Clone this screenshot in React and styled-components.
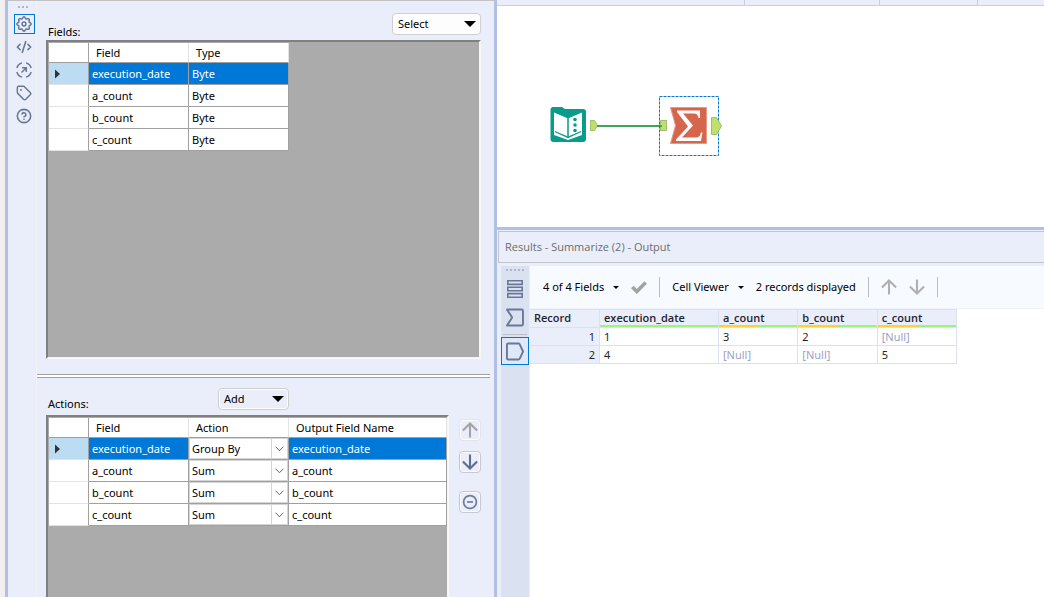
import React from "react";
import styled, { createGlobalStyle } from "styled-components";
import { CircleHelp, CodeXml, Tag } from "lucide-react";

const GlobalStyle = createGlobalStyle`
  * {
    box-sizing: border-box;
  }
  body {
    margin: 0;
    background: #eaeefa;
    color: #000;
    font-family: "Noto Sans", "Open Sans", sans-serif;
    font-size: 11px;
    line-height: 16px;
  }
  button, select {
    font: inherit;
    color: inherit;
  }
  svg {
    display: block;
    flex: none;
  }
`;

const Page = styled.div`
  display: flex;
  height: 100vh;
  overflow: hidden;
`;
const Edge = styled.div`
  flex: none;
  width: 8px;
  background: #f0f0f0;
  border-right: 3px solid #b1c0e2;
`;
const Config = styled.section`
  display: flex;
  flex: none;
  width: 489px;
  border-top: 1px solid #c3c3c6;
  border-right: 3px solid #b1c0e2;
`;
const Rail = styled.nav`
  display: flex;
  flex-direction: column;
  flex: none;
  width: 29px;
  padding: 5px 0 0 6px;
  border-right: 1px solid #f0f2f8;
`;
const Grip = styled.div`
  width: ${(props) => props.$width};
  height: 2px;
  background: repeating-linear-gradient(90deg, #b4b6bc 0 2px, transparent 2px 4px);
  ${Rail} > & {
    margin-left: 4px;
  }
`;
const RailButton = styled.button`
  display: flex;
  align-items: center;
  justify-content: flex-start;
  width: 21px;
  height: 20px;
  margin-bottom: 3px;
  padding: 0 0 0 1px;
  background: none;
  border: 1px solid ${(props) => (props.$active ? "#0078d7" : "transparent")};
  color: #6a7896;
  ${Grip} + & {
    margin-top: 6px;
  }
`;
const Panes = styled.div`
  display: flex;
  flex-direction: column;
  flex: 1;
  min-width: 0;
`;
const Pane = styled.div`
  display: flex;
  flex-direction: column;
  flex: ${(props) => props.$flex};
  min-height: 0;
  padding: ${(props) => props.$padding};
`;
const Splitter = styled.div`
  flex: none;
  height: 4px;
  margin-right: 4px;
  background: #fff;
  border: solid #a0a0a0;
  border-width: 1px 0;
`;
const PaneHead = styled.div`
  display: flex;
  justify-content: ${(props) => (props.$spread ? "space-between" : "flex-start")};
  height: 27px;
  padding-left: 2px;
`;
const PaneLabel = styled.h2`
  width: 170px;
  margin: 0;
  padding-top: ${(props) => props.$top};
  font-size: 11px;
  font-weight: 400;
  line-height: 17px;
`;
const MenuButton = styled.button`
  display: flex;
  align-items: center;
  justify-content: space-between;
  width: ${(props) => props.$width};
  height: 22px;
  padding: 0 4px 0 5px;
  background: ${(props) => (props.$tinted ? "#eaeefa" : "#fdfdfd")};
  border: 1px solid #cfcfd2;
  border-radius: 4px;
  box-shadow: inset 0 0 0 1px #fdfdfd;
`;
const Frame = styled.div`
  flex: 1;
  min-width: 0;
  padding: 1px 0 0 1px;
  background: #ababab;
  border: solid;
  border-width: 2px 2px ${(props) => (props.$open ? "0" : "2px")} 2px;
  border-color: #808080 #f6f6f6 #f6f6f6 #808080;
  overflow: hidden;
`;
const FrameRow = styled.div`
  display: flex;
  gap: 10px;
  flex: 1;
  min-height: 0;
`;
const Grid = styled.table`
  width: ${(props) => props.$width};
  table-layout: fixed;
  border-collapse: separate;
  border-spacing: 0;
`;
const HeadCell = styled.th`
  width: ${(props) => props.$width};
  height: 20px;
  padding: 0 0 0 7px;
  background: #fff;
  border-right: 1px solid #e3e3e3;
  border-bottom: 1px solid #a0a0a0;
  font-weight: 400;
  text-align: left;
  &:first-child {
    border-right-color: #a0a0a0;
  }
`;
const RowMark = styled.td`
  height: 22px;
  padding: 0 0 0 5px;
  background: ${(props) => (props.$active ? "#bbdcf3" : "#fff")};
  border-right: 1px solid #a0a0a0;
  border-bottom: 1px solid #e3e3e3;
`;
const Cell = styled.td`
  height: 22px;
  padding: 0 0 0 ${(props) => (props.$flush ? "0" : "3px")};
  background: ${(props) => (props.$active ? "#0078d7" : "#fff")};
  border-right: 1px solid #a0a0a0;
  border-bottom: 1px solid #a0a0a0;
  color: ${(props) => (props.$active ? "#fff" : "#000")};
`;
const SelectWrap = styled.div`
  display: grid;
  grid-template-columns: 1fr 16px;
  align-items: center;
  height: 21px;
  background: #fff;
  border: 1px solid #d5d5d5;
  color: #000;
  > * {
    grid-row: 1;
  }
  svg {
    grid-column: 2;
    justify-self: center;
    pointer-events: none;
  }
`;
const ActionSelect = styled.select`
  grid-column: 1 / 3;
  width: 100%;
  height: 19px;
  padding: 0 16px 0 2px;
  appearance: none;
  background: linear-gradient(#d5d5d5, #d5d5d5) right 15px top 0 / 1px 100% no-repeat;
  border: 0;
  border-radius: 0;
`;
const SideButtons = styled.div`
  display: flex;
  flex-direction: column;
  gap: 10px;
  padding-top: 4px;
`;
const SideButton = styled.button`
  display: flex;
  align-items: center;
  justify-content: center;
  width: 22px;
  height: 22px;
  padding: 0;
  background: #eaeefa;
  border: 1px solid ${(props) => (props.disabled ? "#e2e4ea" : "#c6c8ce")};
  border-radius: 4px;
  box-shadow: inset 0 0 0 1px #fbfbfd;
  color: ${(props) => (props.disabled ? "#a3a3a3" : "#5f6d90")};
  &:last-child {
    margin-top: 8px;
  }
`;

const Main = styled.main`
  display: flex;
  flex-direction: column;
  flex: 1;
  min-width: 0;
`;
const TabStrip = styled.div`
  display: flex;
  flex: none;
  height: 6px;
  border-bottom: 1px solid #c5cfe8;
`;
const TabSlot = styled.div`
  width: ${(props) => props.$width};
  border-right: 1px solid #c5cfe8;
`;
const Canvas = styled.div`
  position: relative;
  flex: none;
  height: 221px;
  background: #fff;
`;
const Node = styled.div`
  position: absolute;
  left: ${(props) => props.$x}px;
  top: ${(props) => props.$y}px;
`;
const Results = styled.section`
  display: flex;
  flex-direction: column;
  flex: 1;
  min-height: 0;
  padding: 1px 0 0 1px;
  border-top: 3px solid #b1c0e2;
`;
const ResultsTitle = styled.h2`
  flex: none;
  height: 32px;
  margin: 0;
  padding: 0 6px;
  border: 1px solid #c4c5ca;
  border-right: 0;
  color: #6d6d6d;
  font-family: "Open Sans", "Noto Sans", sans-serif;
  font-size: 11px;
  font-weight: 400;
  line-height: 30px;
`;
const ResultsBody = styled.div`
  display: flex;
  flex: 1;
  min-height: 0;
  padding: 3px 0 0 3px;
`;
const ResultsRail = styled.nav`
  display: flex;
  flex-direction: column;
  align-items: center;
  flex: none;
  width: 28px;
  padding-top: 3px;
  background: #dae1f0;
`;
const ViewButton = styled.button`
  display: flex;
  align-items: center;
  justify-content: center;
  width: 28px;
  height: 28px;
  margin-top: ${(props) => (props.$active ? "2px" : "0")};
  padding: 0;
  background: ${(props) => (props.$active ? "#dfe8f8" : "none")};
  border: 1px solid ${(props) => (props.$active ? "#0078d7" : "transparent")};
  color: #6a7896;
  ${Grip} + & {
    margin-top: 4px;
  }
`;
const RailRule = styled.div`
  width: 24px;
  height: 1px;
  margin-top: 3px;
  background: #bcc0c8;
`;
const ResultsPane = styled.div`
  flex: 1;
  min-width: 0;
  margin-left: 1px;
  background: #fff;
`;
const Toolbar = styled.div`
  display: flex;
  align-items: center;
  gap: 12px;
  height: 43px;
  padding-left: 13px;
  background: #f7faff;
  border-bottom: 1px solid #eef2fa;
  white-space: nowrap;
`;
const ToolButton = styled.button`
  display: flex;
  align-items: center;
  gap: 9px;
  padding: 0;
  background: none;
  border: 0;
  color: ${(props) => (props.disabled ? "#b0b0b0" : "#000")};
`;
const Divider = styled.span`
  width: 1px;
  height: 20px;
  background: #bdbdbd;
`;
const ResultsTable = styled.table`
  table-layout: fixed;
  width: 427px;
  border-collapse: separate;
  border-spacing: 0;
  color: #1f2430;
`;
const ResultHead = styled.th`
  width: ${(props) => props.$width};
  height: 19px;
  padding: 0;
  background: #eaeefa;
  border: solid #dae1f0;
  border-width: 1px 1px 1px 0;
  font-family: "Open Sans", "Noto Sans", sans-serif;
  font-weight: 600;
  line-height: 16px;
  text-align: left;
`;
const HeadText = styled.div`
  height: 17px;
  padding-left: 4px;
  background: ${(props) =>
    props.$filled === undefined
      ? "none"
      : `linear-gradient(90deg, #ffd42a ${props.$filled}%, #99f57b ${props.$filled}%) bottom / 100% 2px no-repeat`};
`;
const ResultCell = styled.td`
  height: 18px;
  padding: 1px 4px 0;
  background: #fff;
  border: solid #dae1f0;
  border-width: 0 1px 1px 0;
  color: ${(props) => (props.$empty ? "#9c9fc6" : "inherit")};
`;
const RecordCell = styled(ResultCell)`
  padding-top: 0;
  background: #eaeefa;
  text-align: right;
`;

const FIELDS = ["execution_date", "a_count", "b_count", "c_count"];
const RECORDS = [
  ["1", "3", "2", "[Null]"],
  ["4", "[Null]", "[Null]", "5"],
];

// scalloped outline with eight teeth
const gearPath = () => {
  const points = [];
  for (let i = 0; i < 96; i++) {
    const a = (i / 96) * Math.PI * 2;
    const r = 6.3 + 0.8 * Math.cos(a * 8);
    points.push(`${(8 + r * Math.cos(a)).toFixed(2)} ${(8 + r * Math.sin(a)).toFixed(2)}`);
  }
  return `M${points.join("L")}Z`;
};

const GearIcon = () => (
  <svg width="16" height="16" viewBox="0 0 16 16" fill="none" stroke="currentColor" strokeWidth="1.5">
    <path d={gearPath()} />
    <circle cx="8" cy="8" r="1.900" />
  </svg>
);
const TargetIcon = () => (
  <svg width="16" height="16" viewBox="0 0 16 16" fill="none" stroke="currentColor" strokeWidth="1.5">
    <path d="M6 .9A7.2 7.2 0 0 0 .9 6M10 .9A7.2 7.2 0 0 1 15.1 6M15.1 10A7.2 7.2 0 0 1 10 15.1M6 15.1A7.2 7.2 0 0 1 .9 10M5.5 10.500l4.500-4.500M6 5.700h4.300V10" />
  </svg>
);
const TriangleDown = () => (
  <svg width="12" height="6" viewBox="0 0 12 6">
    <path d="M0 0h12L6 6z" />
  </svg>
);
const SmallCaret = () => (
  <svg width="6" height="3" viewBox="0 0 6 3">
    <path d="M0 0h6L3 3z" />
  </svg>
);
const Chevron = () => (
  <svg width="9" height="6" viewBox="0 0 9 6" fill="none" stroke="#606060">
    <path d="M.5 .7l4 4 4-4" />
  </svg>
);
const RowArrow = () => (
  <svg width="7" height="10" viewBox="0 0 7 10" fill="#333">
    <path d="M1 .5v9L6 5z" />
  </svg>
);
const ArrowIcon = ({ down }) => (
  <svg width="16" height="16" viewBox="0 0 16 16" fill="none" stroke="currentColor" strokeWidth="2.100">
    <path d={down ? "M8 .5v14M.900 7.500L8 14.500l7.100-7" : "M8 15.500v-14M.900 8.500L8 1.500l7.100 7"} />
  </svg>
);
const MinusIcon = () => (
  <svg width="16" height="16" viewBox="0 0 16 16" fill="none" stroke="#6f7c9c" strokeWidth="1.700">
    <circle cx="8" cy="8" r="6.4" />
    <path d="M5 8h6" />
  </svg>
);
const ListIcon = () => (
  <svg width="16" height="18" viewBox="0 0 16 18" fill="none" stroke="currentColor" strokeWidth="1.600">
    <path d="M.8.8h14.400v3.600H.8zM.8 7.200h14.400v3.600H.8zM.8 13.600h14.400v3.600H.8z" />
  </svg>
);
const InputIcon = () => (
  <svg width="18" height="19" viewBox="0 0 19 19" fill="none" stroke="currentColor" strokeWidth="2">
    <path d="M1 1h15.5q1.4 0 1.4 1.4v14.2q0 1.4-1.4 1.4H1l5.500-8.5z" strokeLinejoin="round" />
  </svg>
);
const OutputIcon = () => (
  <svg width="18" height="19" viewBox="0 0 19 19" fill="none" stroke="currentColor" strokeWidth="2">
    <path d="M2.4 1h10.8q.800 0 1.200.700L18 9.500l-3.600 7.800q-.4.700-1.200.700H2.4Q1 18 1 16.600V2.400Q1 1 2.400 1z" strokeLinejoin="round" />
  </svg>
);
const CheckIcon = () => (
  <svg width="16" height="13" viewBox="0 0 16 13" fill="none" stroke="#a3a3a3" strokeWidth="3.600">
    <path d="M1.300 6l4.500 4.500L14.700 1.500" />
  </svg>
);

// input tool, connector and the selected summarize tool
const Workflow = () => (
  <svg width="174" height="62" viewBox="0 0 174 62" role="img" aria-label="Workflow">
    <path d="M3 12h10l3 2h18q3 0 3 3v27q0 3-3 3H4.500q-3 0-3-3V14z" fill="#089c8b" />
    <path d="M5 17.500l13 5.500v18L5 36.500zM33 17.500l-13 5.500v18l13-4.500z" fill="#fff" />
    <path d="M5 36v4l14 5 14-5v-4l-14 6z" fill="#fff" />
    <path d="M6 36.500l13 6L32 36.500" fill="none" stroke="#089c8b" strokeWidth="1.300" />
    <path d="M19 23v18" stroke="#7cc9c0" />
    <g fill="#089c8b">
      <circle cx="26" cy="24.500" r="1.800" />
      <circle cx="26" cy="30" r="1.800" />
      <circle cx="26" cy="35.500" r="1.800" />
    </g>
    <path d="M41.500 25.500h4l3 5-3 5h-4z" fill="#bfe06a" stroke="#9fbd6a" />
    <path d="M111.500 25.500h6v10h-6z" fill="#bfe06a" stroke="#9fbd6a" />
    <path d="M48 31h65" stroke="#3fa45c" strokeWidth="2" />
    <rect x="110.500" y="1.500" width="59" height="59" fill="none" stroke="#0a78d2" strokeDasharray="3 1" />
    <path d="M121.500 12.500h36v36h-36l5-18z" fill="#d5654b" stroke="#e39a87" />
    <path d="M128 15.500h23v7.500h-1.500q-.5-4.500-4.500-4.500h-11l10 12-11 12H147q4 0 5-5h1.500L152 46h-25v-1.500L139 31.500 128 17z" fill="#fff" />
    <path d="M162.500 22.500h5l5 8.500-5 8.500h-5z" fill="#bfe06a" stroke="#9fbd6a" />
  </svg>
);

const GridHead = ({ titles, fluid }) => (
  <thead>
    <tr>
      <HeadCell $width="40px" aria-label="Row" />
      {titles.map((title, i) => (
        <HeadCell key={title} $width={fluid && i === 2 ? "auto" : "100px"}>
          {title}
        </HeadCell>
      ))}
    </tr>
  </thead>
);

const FieldsGrid = () => (
  <Grid $width="240px" aria-labelledby="fields">
    <GridHead titles={["Field", "Type"]} />
    <tbody>
      {FIELDS.map((name, i) => (
        <tr key={name}>
          <RowMark $active={i === 0}>{i === 0 && <RowArrow />}</RowMark>
          <Cell $active={i === 0}>{name}</Cell>
          <Cell $active={i === 0}>Byte</Cell>
        </tr>
      ))}
    </tbody>
  </Grid>
);

const ActionsGrid = () => (
  <Grid $width="100%" aria-labelledby="actions">
    <GridHead titles={["Field", "Action", "Output Field Name"]} fluid />
    <tbody>
      {FIELDS.map((name, i) => (
        <tr key={name}>
          <RowMark $active={i === 0}>{i === 0 && <RowArrow />}</RowMark>
          <Cell $active={i === 0}>{name}</Cell>
          <Cell $flush>
            <SelectWrap>
              <ActionSelect aria-label={`Action for ${name}`} defaultValue={i === 0 ? "Group By" : "Sum"}>
                <option>Group By</option>
                <option>Sum</option>
              </ActionSelect>
              <Chevron />
            </SelectWrap>
          </Cell>
          <Cell $active={i === 0}>{name}</Cell>
        </tr>
      ))}
    </tbody>
  </Grid>
);

const ConfigPanel = () => (
  <Config>
    <Rail>
      <Grip $width="10px" />
      <RailButton $active aria-label="Configuration">
        <GearIcon />
      </RailButton>
      <RailButton aria-label="XML">
        <CodeXml size={16} strokeWidth={2.4} />
      </RailButton>
      <RailButton aria-label="Navigation">
        <TargetIcon />
      </RailButton>
      <RailButton aria-label="Annotation">
        <Tag size={16} strokeWidth={2.2} />
      </RailButton>
      <RailButton aria-label="Help">
        <CircleHelp size={16} strokeWidth={2.4} />
      </RailButton>
    </Rail>
    <Panes>
      <Pane $flex="1" $padding="12px 13px 15px 9px">
        <PaneHead $spread>
          <PaneLabel id="fields" $top="10px">
            Fields:
          </PaneLabel>
          <MenuButton $width="89px" aria-haspopup="menu">
            Select
            <TriangleDown />
          </MenuButton>
        </PaneHead>
        <Frame>
          <FieldsGrid />
        </Frame>
      </Pane>
      <Splitter />
      <Pane $flex="0 0 219px" $padding="10px 13px 0 9px">
        <PaneHead>
          <PaneLabel id="actions" $top="7px">
            Actions:
          </PaneLabel>
          <MenuButton $width="71px" $tinted aria-haspopup="menu">
            Add
            <TriangleDown />
          </MenuButton>
        </PaneHead>
        <FrameRow>
          <Frame $open>
            <ActionsGrid />
          </Frame>
          <SideButtons>
            <SideButton disabled aria-label="Move up">
              <ArrowIcon />
            </SideButton>
            <SideButton aria-label="Move down">
              <ArrowIcon down />
            </SideButton>
            <SideButton aria-label="Remove">
              <MinusIcon />
            </SideButton>
          </SideButtons>
        </FrameRow>
      </Pane>
    </Panes>
  </Config>
);

const ResultsPanel = () => (
  <Results>
    <ResultsTitle>Results - Summarize (2) - Output</ResultsTitle>
    <ResultsBody>
      <ResultsRail>
        <Grip $width="18px" />
        <ViewButton aria-label="Messages">
          <ListIcon />
        </ViewButton>
        <ViewButton aria-label="Input data">
          <InputIcon />
        </ViewButton>
        <RailRule />
        <ViewButton $active aria-label="Output data">
          <OutputIcon />
        </ViewButton>
      </ResultsRail>
      <ResultsPane>
        <Toolbar>
          <ToolButton>
            4 of 4 Fields <SmallCaret />
          </ToolButton>
          <ToolButton aria-label="Apply">
            <CheckIcon />
          </ToolButton>
          <Divider />
          <ToolButton>
            Cell Viewer <SmallCaret />
          </ToolButton>
          <span>2 records displayed</span>
          <Divider />
          <ToolButton disabled aria-label="Previous">
            <ArrowIcon />
          </ToolButton>
          <ToolButton disabled aria-label="Next">
            <ArrowIcon down />
          </ToolButton>
          <Divider />
        </Toolbar>
        <ResultsTable>
          <thead>
            <tr>
              <ResultHead $width="70px">
                <HeadText>Record</HeadText>
              </ResultHead>
              {FIELDS.map((name, i) => (
                <ResultHead key={name} $width={i === 0 ? "119px" : "auto"}>
                  <HeadText $filled={i === 0 ? 0 : 50}>{name}</HeadText>
                </ResultHead>
              ))}
            </tr>
          </thead>
          <tbody>
            {RECORDS.map((record, i) => (
              <tr key={i}>
                <RecordCell>{i + 1}</RecordCell>
                {record.map((value, j) => (
                  <ResultCell key={j} $empty={value === "[Null]"}>
                    {value}
                  </ResultCell>
                ))}
              </tr>
            ))}
          </tbody>
        </ResultsTable>
      </ResultsPane>
    </ResultsBody>
  </Results>
);

const App = () => {
  return (
    <>
      <GlobalStyle />
      <Page>
        <Edge />
        <ConfigPanel />
        <Main>
          <TabStrip>
            <TabSlot $width="248px" />
            <TabSlot $width="135px" />
            <TabSlot $width="98px" />
          </TabStrip>
          <Canvas>
            <Node $x={52} $y={89}>
              <Workflow />
            </Node>
          </Canvas>
          <ResultsPanel />
        </Main>
      </Page>
    </>
  );
};

export default App;
